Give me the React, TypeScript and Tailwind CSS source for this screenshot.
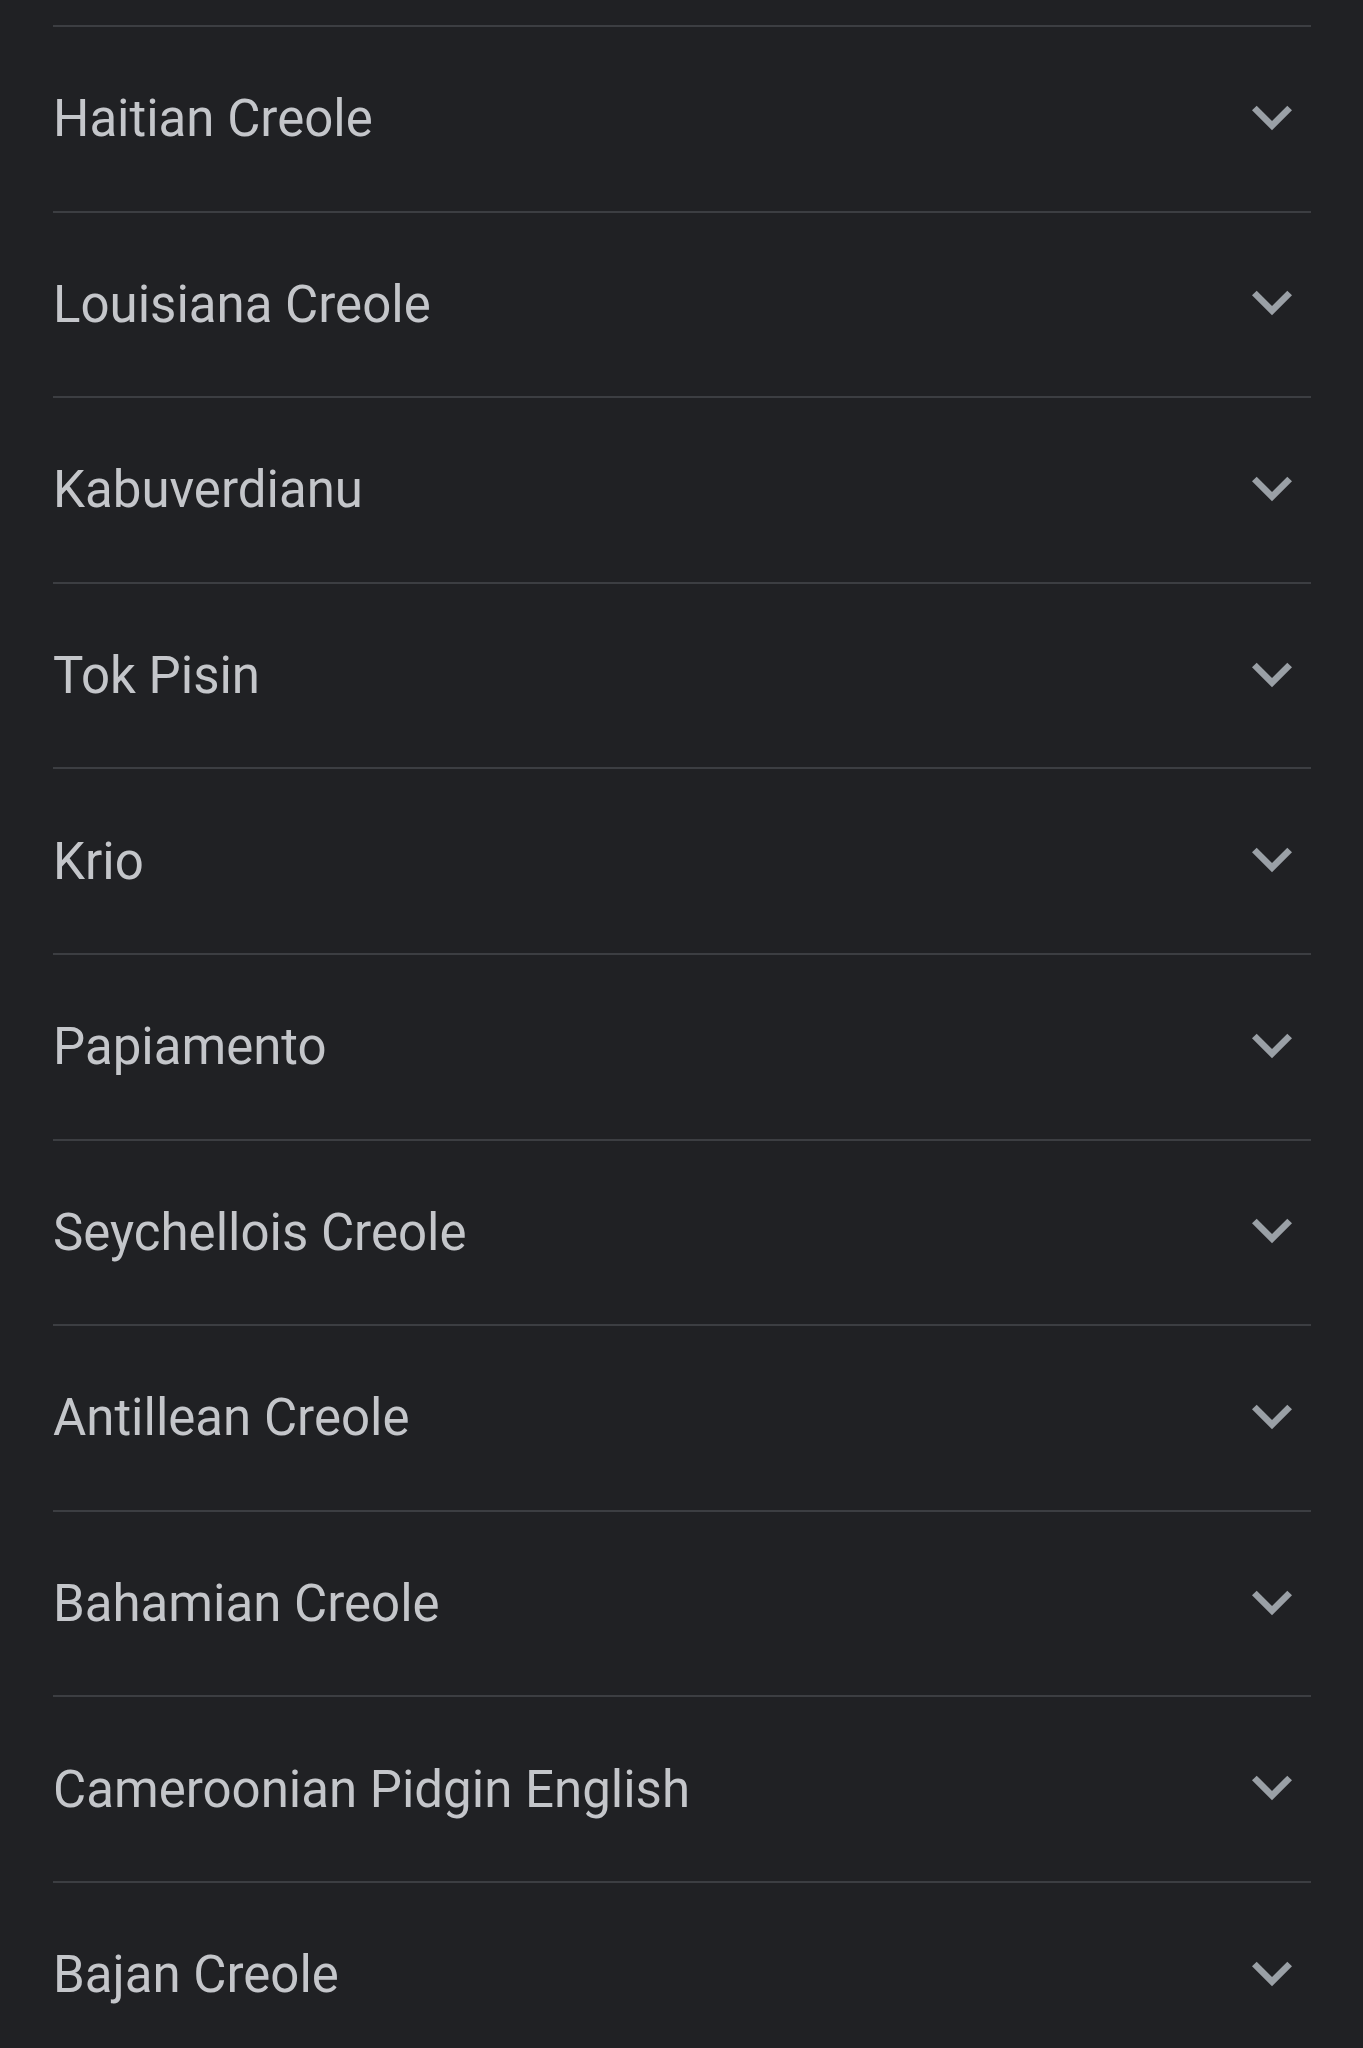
import React from "react";

const items = [
  "Haitian Creole",
  "Louisiana Creole",
  "Kabuverdianu",
  "Tok Pisin",
  "Krio",
  "Papiamento",
  "Seychellois Creole",
  "Antillean Creole",
  "Bahamian Creole",
  "Cameroonian Pidgin English",
  "Bajan Creole",
];

function Chevron() {
  return (
    <svg viewBox="0 0 24 24" className="w-[80px] h-[80px]" fill="#9aa0a6">
      <path d="M16.59 8.59L12 13.17 7.41 8.59 6 10l6 6 6-6z" />
    </svg>
  );
}

export default function App() {
  return (
    <div className="min-h-[2048px] bg-[#202124] pt-[25px] overflow-hidden" style={{ fontFamily: "Roboto, 'Noto Sans', sans-serif" }}>
      <div className="ml-[53px] w-[1258px]">
        {items.map((t) => (
          <div
            key={t}
            className="h-[185.6px] border-t-2 border-[#3c3e42] flex items-center justify-between"
          >
            <span className="text-[51px] leading-none text-[#c4c6ca]">{t}</span>
            <div className="mr-[-1px] mb-[4px]">
              <Chevron />
            </div>
          </div>
        ))}
      </div>
    </div>
  );
}
